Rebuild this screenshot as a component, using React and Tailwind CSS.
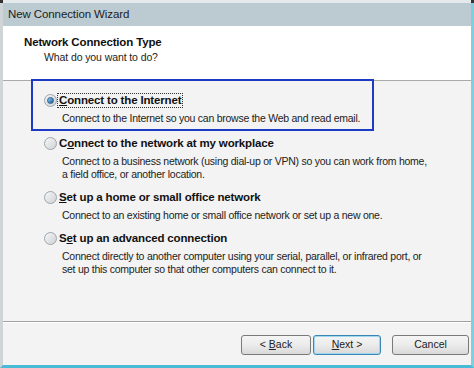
import React from "react";

const font = { fontFamily: '"Liberation Sans", Arial, sans-serif' };

function Radio({ checked }) {
  return (
    <span className="flex h-[13px] w-[13px] shrink-0 items-center justify-center rounded-full border border-[#9aa6ae] bg-gradient-to-br from-[#f6f6f6] to-[#cfd2d5]">
      {checked && (
        <span className="h-[7px] w-[7px] rounded-full border border-[#2a5d8f] bg-gradient-to-br from-[#8fd0f2] to-[#1d5b98]" />
      )}
    </span>
  );
}

function Option({ checked, label, desc, focused }) {
  return (
    <div className="flex flex-col">
      <div className="flex h-[14px] items-center gap-[1px]">
        <Radio checked={checked} />
        <span
          className={
            "px-[1px] text-[11.5px] font-bold leading-[13px] tracking-[-0.15px] text-[#111] " +
            (focused ? "outline outline-1 outline-dotted outline-[#333]" : "")
          }
        >
          {label}
        </span>
      </div>
      <div className="mt-[5px] pl-[18px] text-[10.5px] leading-[13px] tracking-[-0.25px] text-[#222]">
        {desc}
      </div>
    </div>
  );
}

function Button({ children, active, w }) {
  return (
    <div
      className={
        "flex h-[20px] items-center justify-center rounded-[3px] border bg-gradient-to-b from-[#f5f5f5] via-[#ebebeb] to-[#d9d9d9] text-[10.5px] text-[#222] " +
        (active ? "border-[#3a86b4] shadow-[inset_0_0_0_1px_#9fd8ee] " : "border-[#7a7a7a] ") +
        w
      }
    >
      {children}
    </div>
  );
}

export default function App() {
  return (
    <div className="flex h-[368px] w-[474px] flex-col overflow-hidden bg-[#f3f3f3]" style={font}>
      <div className="flex h-[3px] justify-between bg-[#e4eaec]">
        <span className="h-[3px] w-[3px] bg-[#333]" />
        <span className="h-[3px] w-[3px] bg-[#333]" />
      </div>
      <div className="flex flex-1 flex-col border-b-[3px] border-l-[3px] border-r-[3px] border-b-[#48bbd6] border-l-[#cfd4d7] border-r-[#7fcfe2]">
        <div className="flex h-[23px] items-center bg-[#bccbd1] pl-[5px] text-[11.5px] tracking-[-0.1px] text-[#222]">
          New Connection Wizard
        </div>
        <div className="flex h-[55px] flex-col border-b border-[#a9a9a9] bg-white pl-[21px] pt-[9px]">
          <div className="text-[11.5px] font-bold leading-[14px] tracking-[-0.15px] text-[#111]">Network Connection Type</div>
          <div className="pl-[20px] pt-[2px] text-[10.5px] leading-[13px] tracking-[-0.1px] text-[#222]">What do you want to do?</div>
        </div>
        <div className="flex flex-1 flex-col">
          <div className="ml-[28px] mt-[-2px] w-[343px] border-2 border-[#1c3ac4] pb-[4px] pl-[11px] pt-[12px]">
            <Option
              checked
              focused
              label={<><u>C</u>onnect to the Internet</>}
              desc="Connect to the Internet so you can browse the Web and read email."
            />
          </div>
          <div className="flex flex-col gap-[9px] pl-[41px] pt-[5px]">
            <Option
              label={<>C<u>o</u>nnect to the network at my workplace</>}
              desc={<>Connect to a business network (using dial-up or VPN) so you can work from home,<br />a field office, or another location.</>}
            />
            <Option
              label={<><u>S</u>et up a home or small office network</>}
              desc="Connect to an existing home or small office network or set up a new one."
            />
            <Option
              label={<>S<u>e</u>t up an advanced connection</>}
              desc={<>Connect directly to another computer using your serial, parallel, or infrared port, or<br />set up this computer so that other computers can connect to it.</>}
            />
          </div>
        </div>
        <div className="h-[2px] border-t border-[#a0a0a0] bg-white" />
        <div className="flex h-[42px] items-start justify-end pr-[2px] pt-[12px]">
          <Button w="w-[70px]">&lt;&nbsp;<u>B</u>ack</Button>
          <div className="w-[2px]" />
          <Button active w="w-[68px]"><u>N</u>ext&nbsp;&gt;</Button>
          <div className="w-[11px]" />
          <Button w="w-[77px]">Cancel</Button>
        </div>
      </div>
    </div>
  );
}
